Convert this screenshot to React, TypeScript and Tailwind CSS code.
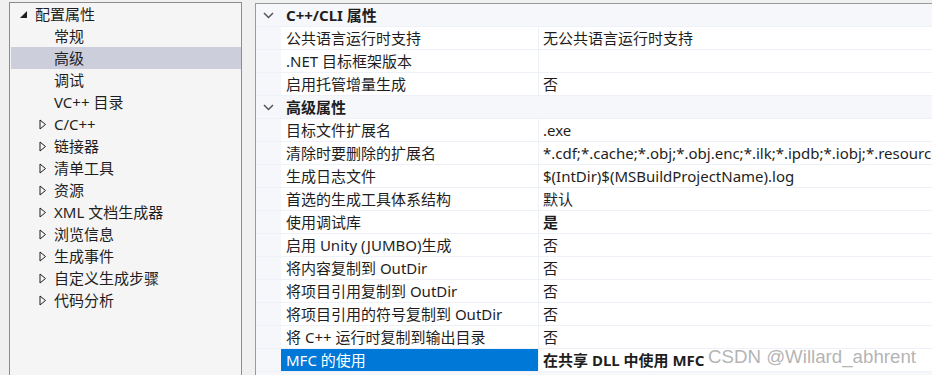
import { ReactNode } from 'react'

type Prop = { name: string; value: string; bold?: boolean; selected?: boolean }

const cli: Prop[] = [
  { name: '公共语言运行时支持', value: '无公共语言运行时支持' },
  { name: '.NET 目标框架版本', value: '' },
  { name: '启用托管增量生成', value: '否' },
]

const advanced: Prop[] = [
  { name: '目标文件扩展名', value: '.exe' },
  { name: '清除时要删除的扩展名', value: '*.cdf;*.cache;*.obj;*.obj.enc;*.ilk;*.ipdb;*.iobj;*.resources;*.tlb;*.tli;*.tlh;*.tmp' },
  { name: '生成日志文件', value: '$(IntDir)$(MSBuildProjectName).log' },
  { name: '首选的生成工具体系结构', value: '默认' },
  { name: '使用调试库', value: '是', bold: true },
  { name: '启用 Unity (JUMBO)生成', value: '否' },
  { name: '将内容复制到 OutDir', value: '否' },
  { name: '将项目引用复制到 OutDir', value: '否' },
  { name: '将项目引用的符号复制到 OutDir', value: '否' },
  { name: '将 C++ 运行时复制到输出目录', value: '否' },
  { name: 'MFC 的使用', value: '在共享 DLL 中使用 MFC', bold: true, selected: true },
]

const leaves = ['常规', '高级', '调试', 'VC++ 目录']
const groups = ['C/C++', '链接器', '清单工具', '资源', 'XML 文档生成器', '浏览信息', '生成事件', '自定义生成步骤', '代码分析']

function Expanded() {
  return (
    <svg width="9" height="9" viewBox="0 0 9 9" className="shrink-0">
      <path d="M8 1 L8 8 L1 8 Z" fill="#1e1e1e" />
    </svg>
  )
}

function Collapsed() {
  return (
    <svg width="8" height="11" viewBox="0 0 8 11" className="shrink-0">
      <path d="M1 1 L6.5 5.5 L1 10 Z" fill="none" stroke="#1e1e1e" strokeWidth="1" />
    </svg>
  )
}

function Chevron() {
  return (
    <svg width="11" height="7" viewBox="0 0 11 7">
      <path d="M1 1 L5.5 5.5 L10 1" fill="none" stroke="#555" strokeWidth="1.5" />
    </svg>
  )
}

function TreeRow({ children, selected }: { children: ReactNode; selected?: boolean }) {
  return (
    <div className={`flex h-[22px] items-center ${selected ? 'ml-px bg-[#cccedb]' : ''}`}>
      {children}
    </div>
  )
}

function Section({ title }: { title: string }) {
  return (
    <div className="flex h-[23px] items-center bg-[#f5f7fb] border-b border-[#eef1f7]">
      <div className="flex w-[25px] justify-center pt-[1px]">
        <Chevron />
      </div>
      <span className="pl-[5px] font-bold">{title}</span>
    </div>
  )
}

function Row({ p }: { p: Prop }) {
  return (
    <div className="flex h-[23px] border-b border-[#eef1f7]">
      <div className="w-[25px] shrink-0 bg-[#f5f7fb]" />
      <div
        className={`flex w-[258px] shrink-0 items-center border-r border-[#eef1f7] px-[5px] whitespace-nowrap ${
          p.selected ? 'bg-[#0078d7] text-white' : 'bg-white'
        }`}
      >
        {p.name}
      </div>
      <div className={`flex flex-1 items-center bg-white pl-[4px] whitespace-nowrap overflow-hidden ${p.bold ? 'font-bold' : ''}`}>
        {p.value}
      </div>
    </div>
  )
}

export default function App() {
  return (
    <div
      className="relative flex h-[375px] w-[932px] overflow-hidden bg-[#f0f0f0] text-[15px] leading-none text-[#1e1e1e]"
      style={{ fontFamily: '"Noto Sans", "Noto Sans CJK SC", sans-serif' }}
    >
      {/* tree */}
      <div className="ml-[9px] mt-[2px] w-[233px] shrink-0 border-x border-t border-[#8c8c8c] bg-[#f5f5f5]">
        <TreeRow>
          <div className="ml-[9px] mr-[7px] flex w-[9px]"><Expanded /></div>
          <span>配置属性</span>
        </TreeRow>
        {leaves.map(l => (
          <TreeRow key={l} selected={l === '高级'}>
            <span className={l === '高级' ? 'pl-[43px]' : 'pl-[44px]'}>{l}</span>
          </TreeRow>
        ))}
        {groups.map(g => (
          <TreeRow key={g}>
            <div className="ml-[29px] mr-[7px] flex w-[8px]"><Collapsed /></div>
            <span>{g}</span>
          </TreeRow>
        ))}
      </div>

      {/* property grid */}
      <div className="ml-[13px] mt-[3px] flex-1 border-l border-t border-[#9a9a9a] bg-[#f5f7fb] min-w-0">
        <Section title="C++/CLI 属性" />
        {cli.map(p => <Row key={p.name} p={p} />)}
        <Section title="高级属性" />
        {advanced.map(p => <Row key={p.name} p={p} />)}
      </div>

      <div
        className="absolute left-[708px] top-[348px] text-[18.7px] text-[#a0a0a0]/80"
        style={{ fontFamily: '"Liberation Sans", sans-serif' }}
      >
        CSDN @Willard_abhrent
      </div>
    </div>
  )
}
